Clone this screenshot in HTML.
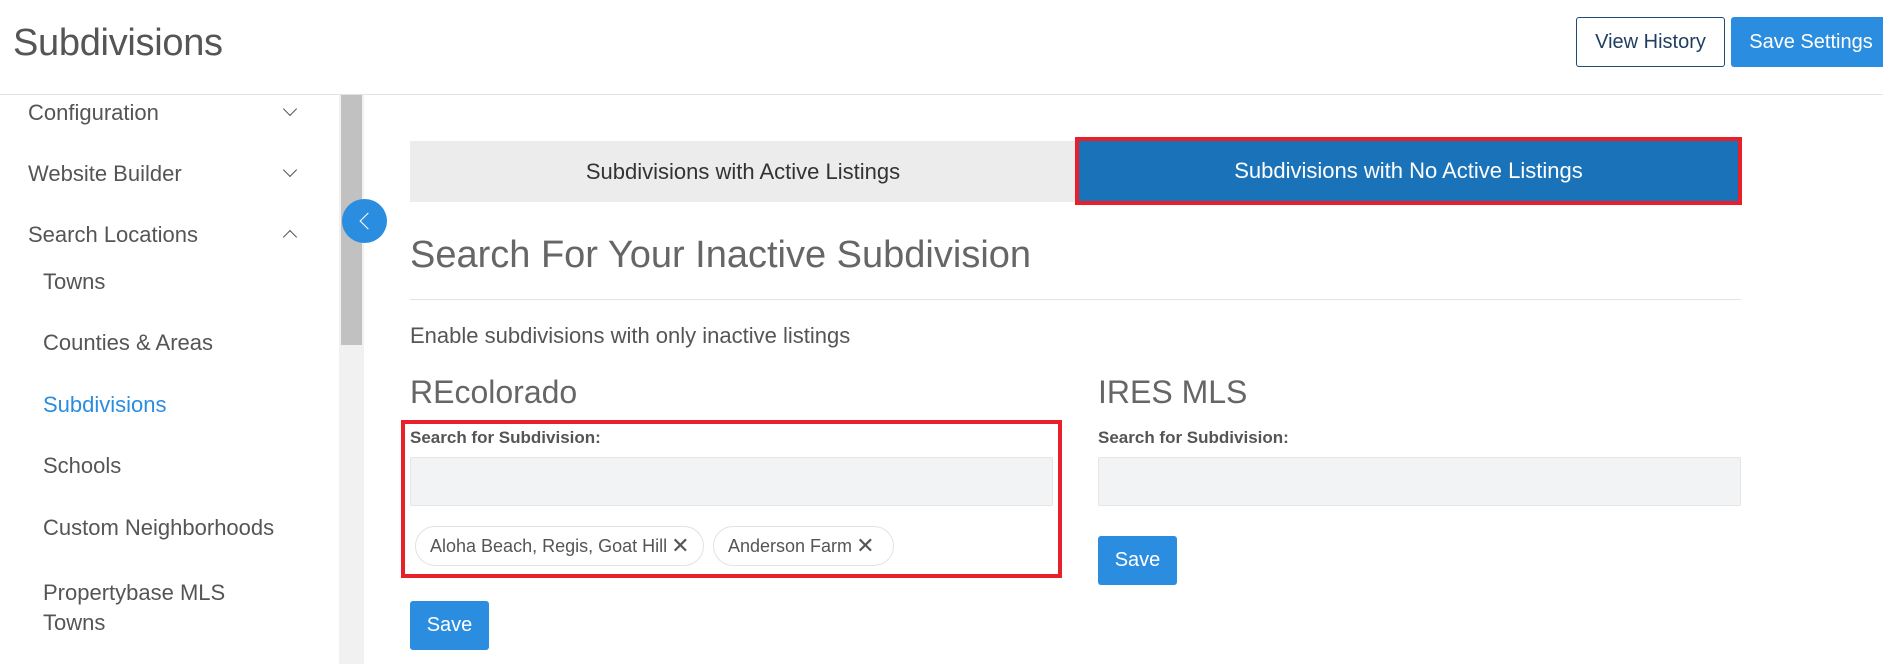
<!DOCTYPE html>
<html><head><meta charset="utf-8"><style>
*{box-sizing:border-box;margin:0;padding:0}
body{width:1883px;height:664px;overflow:hidden;background:#fff;font-family:"Liberation Sans",sans-serif;color:#555;position:relative}
.a{position:absolute;white-space:nowrap}
.btn{position:absolute;border-radius:3px;display:flex;align-items:center;justify-content:center;font-size:20px}
.nav{position:absolute;font-size:22px;line-height:26px;color:#555}
.chev{position:absolute;left:285px;width:10px;height:10px;border-right:1.6px solid #555;border-bottom:1.6px solid #555}
.chip{position:absolute;top:526px;height:40px;border:1px solid #e2e2e2;border-radius:20px;font-size:18px;color:#555;display:flex;align-items:center;padding-left:14px}
</style></head><body>
<div class="a" style="left:13px;top:22px;font-size:38px;color:#555;letter-spacing:-0.3px">Subdivisions</div>
<div class="btn" style="left:1576px;top:17px;width:149px;height:50px;border:1px solid #1f4b78;color:#1f3d5f">View History</div>
<div class="btn" style="left:1731px;top:17px;width:160px;height:50px;background:#2a8de0;color:#fff">Save Settings</div>
<div class="a" style="left:0;top:94px;width:1883px;height:1px;background:#e3e3e3"></div>

<div class="nav" style="left:28px;top:100px">Configuration</div>
<div class="chev" style="top:104px;transform:rotate(45deg)"></div>
<div class="nav" style="left:28px;top:161px">Website Builder</div>
<div class="chev" style="top:165px;transform:rotate(45deg)"></div>
<div class="nav" style="left:28px;top:222px">Search Locations</div>
<div class="chev" style="top:232px;transform:rotate(-135deg)"></div>
<div class="nav" style="left:43px;top:269px">Towns</div>
<div class="nav" style="left:43px;top:330px">Counties &amp; Areas</div>
<div class="nav" style="left:43px;top:392px;color:#2a8de0">Subdivisions</div>
<div class="nav" style="left:43px;top:453px">Schools</div>
<div class="nav" style="left:43px;top:515px">Custom Neighborhoods</div>
<div class="nav" style="left:43px;top:578px;line-height:30px">Propertybase MLS<br>Towns</div>

<div class="a" style="left:339px;top:95px;width:25px;height:569px;background:#f1f1f1"></div>
<div class="a" style="left:341px;top:95px;width:21px;height:250px;background:#c1c1c1"></div>
<div class="a" style="left:342px;top:199px;width:45px;height:44px;border-radius:50%;background:#2a8de0"></div>
<div class="a" style="left:362px;top:215px;width:12px;height:12px;border-left:1.6px solid #fff;border-bottom:1.6px solid #fff;transform:rotate(45deg)"></div>

<div class="a" style="left:410px;top:141px;width:666px;height:61px;background:#ececec;font-size:22px;color:#333;display:flex;align-items:center;justify-content:center">Subdivisions with Active Listings</div>
<div class="a" style="left:1075px;top:137px;width:667px;height:68px;border:4px solid #e8202a;background:#1a73b9;font-size:22px;color:#fff;display:flex;align-items:center;justify-content:center">Subdivisions with No Active Listings</div>

<div class="a" style="left:410px;top:234px;font-size:38px;color:#666">Search For Your Inactive Subdivision</div>
<div class="a" style="left:410px;top:299px;width:1331px;height:1px;background:#e3e3e3"></div>
<div class="a" style="left:410px;top:323px;font-size:22px;color:#555">Enable subdivisions with only inactive listings</div>
<div class="a" style="left:410px;top:374px;font-size:32px;color:#666">REcolorado</div>
<div class="a" style="left:1098px;top:374px;font-size:32px;color:#666">IRES MLS</div>

<div class="a" style="left:401px;top:420px;width:661px;height:158px;border:4px solid #e8202a"></div>
<div class="a" style="left:410px;top:428px;font-size:17px;font-weight:bold;color:#555">Search for Subdivision:</div>
<div class="a" style="left:410px;top:457px;width:643px;height:49px;background:#f2f3f5;border:1px solid #e6e6e6;border-radius:2px"></div>
<div class="chip" style="left:415px;width:289px">Aloha Beach, Regis, Goat Hill <span style="font-size:22px;margin-left:4px">✕</span></div>
<div class="chip" style="left:713px;width:181px">Anderson Farm <span style="font-size:22px;margin-left:4px">✕</span></div>
<div class="btn" style="left:410px;top:601px;width:79px;height:49px;background:#2a8de0;color:#fff">Save</div>

<div class="a" style="left:1098px;top:428px;font-size:17px;font-weight:bold;color:#555">Search for Subdivision:</div>
<div class="a" style="left:1098px;top:457px;width:643px;height:49px;background:#f2f3f5;border:1px solid #e6e6e6;border-radius:2px"></div>
<div class="btn" style="left:1098px;top:536px;width:79px;height:49px;background:#2a8de0;color:#fff">Save</div>
</body></html>
